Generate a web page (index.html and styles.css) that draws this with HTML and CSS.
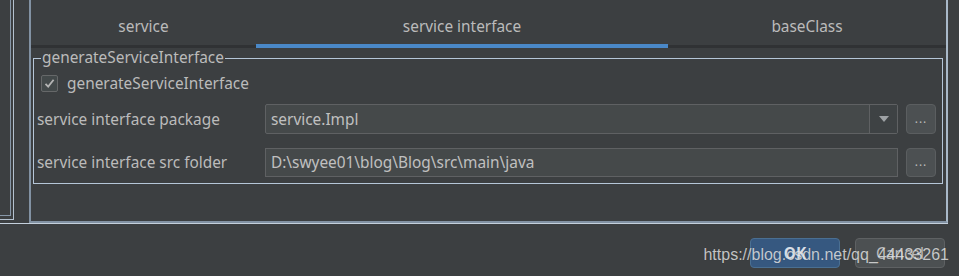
FILE: index.html
```html
<!DOCTYPE html>
<html lang="en">
<head>
  <meta charset="UTF-8">
  <title>Service settings</title>
  <link rel="stylesheet" href="styles.css">
</head>
<body>
  <div class="dialog">
    <div class="top">
      <div class="side">
        <div class="side-outer">
          <div class="side-inner"></div>
        </div>
      </div>
      <div class="panel">
        <div class="tabs">
          <div class="tab">service</div>
          <div class="tab active">service interface</div>
          <div class="tab">baseClass</div>
        </div>
        <fieldset class="group">
          <legend>generateServiceInterface</legend>
          <label class="check">
            <span class="box">
              <svg width="13" height="13" viewBox="0 0 13 13"><path d="M2.5 6.8 L5.2 9.6 L10.6 2.8" fill="none" stroke="#b4b4b4" stroke-width="1.8"/></svg>
            </span>
            generateServiceInterface
          </label>
          <div class="row">
            <span class="label">service interface package</span>
            <div class="combo">
              <span class="value">service.Impl</span>
              <span class="arrow"><svg width="10" height="6" viewBox="0 0 10 6"><path d="M0 0 H10 L5 6 Z" fill="#9ea2a5"/></svg></span>
            </div>
            <button class="browse">...</button>
          </div>
          <div class="row">
            <span class="label">service interface src folder</span>
            <div class="field">D:\swyee01\blog\Blog\src\main\java</div>
            <button class="browse">...</button>
          </div>
        </fieldset>
      </div>
    </div>
    <div class="actions">
      <button class="btn primary">OK</button>
      <button class="btn">Cancel</button>
    </div>
    <div class="watermark">https://blog.csdn.net/qq_44433261</div>
  </div>
</body>
</html>
```

FILE: styles.css
```css
body {
  margin: 0;
  background: #3c3f41;
  color: #bbbbbb;
  font-family: "Noto Sans", "Open Sans", sans-serif;
  font-size: 15.4px;
}
.dialog {
  position: relative;
  width: 959px;
  height: 276px;
  overflow: hidden;
}
.top {
  display: flex;
  width: 948px;
  height: 223px;
  border-bottom: 1px solid #c4d0dc;
}
.side {
  width: 29px;
}
.side-outer {
  width: 13px;
  height: 219px;
  border-right: 1px solid #b3c1cf;
  border-bottom: 1px solid #b3c1cf;
}
.side-inner {
  width: 10px;
  height: 215px;
  border-right: 1px solid #8797a8;
  border-bottom: 1px solid #8797a8;
}
.panel {
  flex: 1;
  border-left: 2px solid #8292a3;
  border-right: 2px solid #a9b9c9;
  border-bottom: 2px solid #8292a3;
}
.tabs {
  display: grid;
  grid-template-columns: 225px 412px 1fr;
  height: 48px;
}
.tab {
  display: flex;
  align-items: center;
  justify-content: center;
  padding-top: 4px;
  box-sizing: border-box;
  box-shadow: inset 0 -3px #303234;
}
.tab.active {
  box-shadow: inset 0 -4px #4a88c7;
}
.group {
  margin: 1px 3px 0 2px;
  padding: 0 6px 6px 3px;
  border: 1px solid #b5c6d8;
}
.group legend {
  margin-left: 4px;
  padding: 0 1px;
  line-height: 18px;
}
.check {
  display: flex;
  align-items: center;
  gap: 9px;
  margin: 8px 0 12px 4px;
  height: 17px;
}
.box {
  display: flex;
  align-items: center;
  justify-content: center;
  width: 15px;
  height: 15px;
  border: 1px solid #666869;
  border-radius: 2px;
  background: #43494a;
}
.row {
  display: grid;
  grid-template-columns: 220px 1fr 30px;
  column-gap: 8px;
  align-items: center;
  height: 30px;
  margin-bottom: 14px;
}
.row:last-child {
  height: 29px;
  margin-bottom: 0;
}
.combo, .field {
  height: 100%;
  box-sizing: border-box;
  border: 1px solid #5f6163;
  background: #45494a;
  display: flex;
  align-items: center;
}
.combo {
  border-radius: 2px;
}
.value, .field {
  padding-left: 5px;
  color: #c0c0c0;
}
.value {
  flex: 1;
}
.arrow {
  width: 27px;
  height: 100%;
  border-left: 1px solid #5f6163;
  display: flex;
  align-items: center;
  justify-content: center;
  background: #3e4244;
}
.browse {
  height: 100%;
  padding: 0 0 2px;
  border: 1px solid #5b5e60;
  border-radius: 4px;
  background: #4c5052;
  color: #bbbbbb;
  font-family: inherit;
  font-size: 12px;
  letter-spacing: 1px;
}
.actions {
  display: flex;
  justify-content: flex-end;
  gap: 15px;
  padding: 14px 14px 0 0;
}
.btn {
  width: 90px;
  height: 30px;
  border: 1px solid #5e6163;
  border-radius: 4px;
  background: #4c5052;
  color: #bbbbbb;
  font-family: inherit;
  font-size: 15.4px;
}
.btn.primary {
  background: #365880;
  border-color: #4a6f92;
  color: #d8dee6;
  font-weight: bold;
}
.watermark {
  position: absolute;
  right: 10px;
  top: 246px;
  font-family: "Liberation Sans", Arial, sans-serif;
  font-size: 16px;
  color: rgba(255, 255, 255, 0.72);
  text-shadow: 0 0 1px rgba(0, 0, 0, 0.3);
}
```
